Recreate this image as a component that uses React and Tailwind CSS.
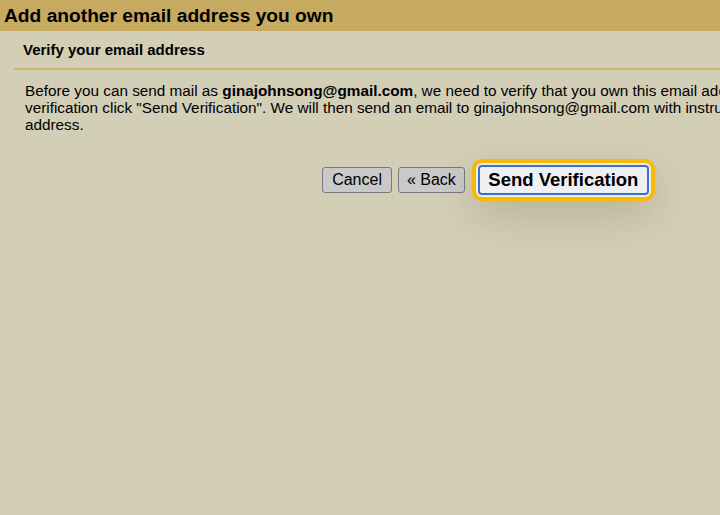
import React from "react";

export default function App() {
  return (
    <div
      className="h-[515px] w-[720px] overflow-hidden bg-[#d3ceb6] text-black"
      style={{ fontFamily: '"Liberation Sans", Arial, sans-serif' }}
    >
      <div className="w-[977px]">
        <div className="h-[31px] bg-[#c6aa5f] pl-[4px] pt-[4px] text-[19.2px] font-bold leading-[23px]">
          Add another email address you own
        </div>
        <div className="pl-[14px]">
          <div className="border-b-2 border-[#d6b46c] pl-[9px] pb-[10px] pt-[10px] text-[15px] font-bold leading-[17px]">
            Verify your email address
          </div>
        </div>
        <p className="pl-[25px] pr-[50px] pt-[12px] text-[15.3px] leading-[17px]">
          Before you can send mail as <b>ginajohnsong@gmail.com</b>, we need to
          verify that you own this email address. To complete the verification
          click "Send Verification". We will then send an email to
          ginajohnsong@gmail.com with instructions on how to verify your
          address.
        </p>
        <div className="mt-[26px] flex items-center justify-center gap-[6px]">
          <button className="h-[26px] rounded-[3px] border border-[#7a7a7a] bg-[#c9c9c9] px-[9px] text-[16px] leading-[20px]">
            Cancel
          </button>
          <button className="h-[26px] rounded-[3px] border border-[#7a7a7a] bg-[#c9c9c9] px-[8px] text-[16px] leading-[20px]">
            « Back
          </button>
          <div className="ml-[1px] rounded-[10px] bg-[#f6b909] p-[4px] shadow-[0_14px_40px_rgba(60,50,20,0.18)]">
            <div className="rounded-[6px] bg-[#f1eee2] p-[2px]">
              <button className="h-[30px] w-[171px] rounded-[4px] border-2 border-[#3d6fcf] bg-[#eef0f4] text-[18.5px] font-bold leading-[22px]">
                Send Verification
              </button>
            </div>
          </div>
        </div>
      </div>
    </div>
  );
}
